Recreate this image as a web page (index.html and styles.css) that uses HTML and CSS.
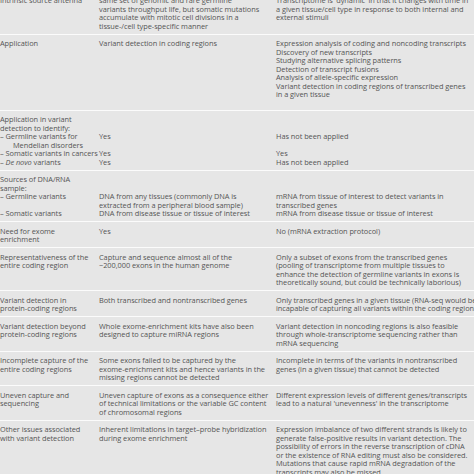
FILE: index.html
```html
<!DOCTYPE html>
<html>
<head>
<meta charset="utf-8">
<link rel="stylesheet" href="styles.css">
</head>
<body>
<div class="tbl">
  <div class="row first">
    <div class="c1">Intrinsic source antenna</div>
    <div class="c2">same set of genomic and rare germline<br>variants throughput life, but somatic mutations<br>accumulate with mitotic cell divisions in a<br>tissue-/cell type-specific manner</div>
    <div class="c3">Transcriptome is 'dynamic' in that it changes with time in<br>a given tissue/cell type in response to both internal and<br>external stimuli</div>
  </div>
  <div class="row tall">
    <div class="c1">Application</div>
    <div class="c2">Variant detection in coding regions</div>
    <div class="c3">Expression analysis of coding and noncoding transcripts<br>Discovery of new transcripts<br>Studying alternative splicing patterns<br>Detection of transcript fusions<br>Analysis of allele-specific expression<br>Variant detection in coding regions of transcribed genes<br>in a given tissue</div>
  </div>
  <div class="row">
    <div class="c1">Application in variant<br>detection to identify:<br>– Germline variants for<br><span class="ind">Mendelian disorders</span><br>– Somatic variants in cancers<br>– <i>De novo</i> variants</div>
    <div class="c2"><br><br>Yes<br><br>Yes<br>Yes</div>
    <div class="c3"><br><br>Has not been applied<br><br>Yes<br>Has not been applied</div>
  </div>
  <div class="row">
    <div class="c1">Sources of DNA/RNA<br>sample:<br>– Germline variants<br><br>– Somatic variants</div>
    <div class="c2"><br><br>DNA from any tissues (commonly DNA is<br>extracted from a peripheral blood sample)<br>DNA from disease tissue or tissue of interest</div>
    <div class="c3"><br><br>mRNA from tissue of interest to detect variants in<br>transcribed genes<br>mRNA from disease tissue or tissue of interest</div>
  </div>
  <div class="row">
    <div class="c1">Need for exome<br>enrichment</div>
    <div class="c2">Yes</div>
    <div class="c3">No (mRNA extraction protocol)</div>
  </div>
  <div class="row">
    <div class="c1">Representativeness of the<br>entire coding region</div>
    <div class="c2">Capture and sequence almost all of the<br>~200,000 exons in the human genome</div>
    <div class="c3">Only a subset of exons from the transcribed genes<br>(pooling of transcriptome from multiple tissues to<br>enhance the detection of germline variants in exons is<br>theoretically sound, but could be technically laborious)</div>
  </div>
  <div class="row">
    <div class="c1">Variant detection in<br>protein-coding regions</div>
    <div class="c2">Both transcribed and nontranscribed genes</div>
    <div class="c3">Only transcribed genes in a given tissue (RNA-seq would be<br>incapable of capturing all variants within the coding regions)</div>
  </div>
  <div class="row">
    <div class="c1">Variant detection beyond<br>protein-coding regions</div>
    <div class="c2">Whole exome-enrichment kits have also been<br>designed to capture miRNA regions</div>
    <div class="c3">Variant detection in noncoding regions is also feasible<br>through whole-transcriptome sequencing rather than<br>mRNA sequencing</div>
  </div>
  <div class="row">
    <div class="c1">Incomplete capture of the<br>entire coding regions</div>
    <div class="c2">Some exons failed to be captured by the<br>exome-enrichment kits and hence variants in the<br>missing regions cannot be detected</div>
    <div class="c3">Incomplete in terms of the variants in nontranscribed<br>genes (in a given tissue) that cannot be detected</div>
  </div>
  <div class="row">
    <div class="c1">Uneven capture and<br>sequencing</div>
    <div class="c2">Uneven capture of exons as a consequence either<br>of technical limitations or the variable GC content<br>of chromosomal regions</div>
    <div class="c3">Different expression levels of different genes/transcripts<br>lead to a natural 'unevenness' in the transcriptome</div>
  </div>
  <div class="row">
    <div class="c1">Other issues associated<br>with variant detection</div>
    <div class="c2">Inherent limitations in target–probe hybridization<br>during exome enrichment</div>
    <div class="c3">Expression imbalance of two different strands is likely to<br>generate false-positive results in variant detection. The<br>possibility of errors in the reverse transcription of cDNA<br>or the existence of RNA editing must also be considered.<br>Mutations that cause rapid mRNA degradation of the<br>transcripts may also be missed</div>
  </div>
</div>
</body>
</html>
```
FILE: styles.css
```css
html, body {
  margin: 0;
  padding: 0;
  background: #e6e6e6;
  overflow: hidden;
  width: 474px;
  height: 474px;
}
.tbl {
  margin-top: -4px;
  font-family: "Open Sans", Lato, sans-serif;
  font-size: 7.4px;
  letter-spacing: -0.05px;
  line-height: 8.5px;
  color: #555555;
}
.row {
  display: grid;
  grid-template-columns: 99px 177px 1fr;
  padding: 4.5px 0 3.5px 0;
  border-bottom: 1px solid #fbfbfb;
}
.row.first {
  padding-top: 0;
}
.row.tall {
  padding-bottom: 11px;
}
.c1, .c2, .c3 {
  white-space: nowrap;
}
.ind {
  padding-left: 13px;
}
```
